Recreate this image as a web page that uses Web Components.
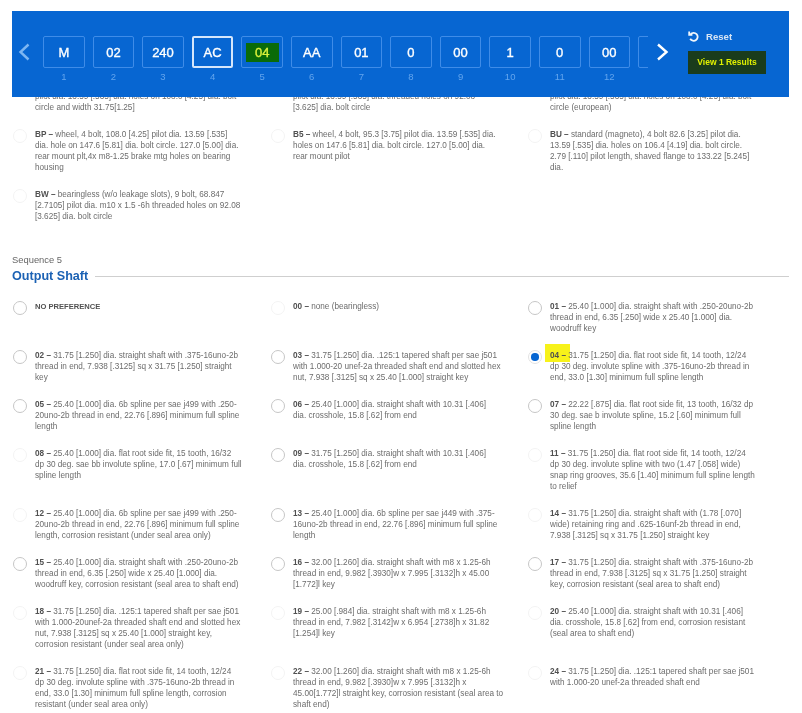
<!DOCTYPE html>
<html>
<head>
<meta charset="utf-8">
<title>Output Shaft</title>
<style>
  html, body { margin: 0; height: 713px; overflow: hidden; background: #fff; }
  body { font-family: "Liberation Sans", Arial, sans-serif; color: #6c6c6c; }
  b { color: #505050; }
  b.caps { font-size: 7.6px; }
</style>
</head>
<body>
<config-bar>
  <seq-cell label="1">M</seq-cell>
  <seq-cell label="2">02</seq-cell>
  <seq-cell label="3">240</seq-cell>
  <seq-cell label="4" active>AC</seq-cell>
  <seq-cell label="5" mark>04</seq-cell>
  <seq-cell label="6">AA</seq-cell>
  <seq-cell label="7">01</seq-cell>
  <seq-cell label="8">0</seq-cell>
  <seq-cell label="9">00</seq-cell>
  <seq-cell label="10">1</seq-cell>
  <seq-cell label="11">0</seq-cell>
  <seq-cell label="12">00</seq-cell>
  <seq-cell label="13"></seq-cell>
</config-bar>

<opt-grid clipped>
  <opt-item hidden-radio>pilot dia. 13.59 [.535] dia. holes on 108.0 [4.25] dia. bolt<br>circle and width 31.75[1.25]</opt-item>
  <opt-item hidden-radio>pilot dia. 13.59 [.535] dia. threaded holes on 92.08<br>[3.625] dia. bolt circle</opt-item>
  <opt-item hidden-radio>pilot dia. 13.59 [.535] dia. holes on 108.0 [4.25] dia. bolt<br>circle (european)</opt-item>

  <opt-item faint><b>BP –</b> wheel, 4 bolt, 108.0 [4.25] pilot dia. 13.59 [.535]<br>dia. hole on 147.6 [5.81] dia. bolt circle. 127.0 [5.00] dia.<br>rear mount plt,4x m8-1.25 brake mtg holes on bearing<br>housing</opt-item>
  <opt-item faint><b>B5 –</b> wheel, 4 bolt, 95.3 [3.75] pilot dia. 13.59 [.535] dia.<br>holes on 147.6 [5.81] dia. bolt circle. 127.0 [5.00] dia.<br>rear mount pilot</opt-item>
  <opt-item faint><b>BU –</b> standard (magneto), 4 bolt 82.6 [3.25] pilot dia.<br>13.59 [.535] dia. holes on 106.4 [4.19] dia. bolt circle.<br>2.79 [.110] pilot length, shaved flange to 133.22 [5.245]<br>dia.</opt-item>

  <opt-item faint><b>BW –</b> bearingless (w/o leakage slots), 9 bolt, 68.847<br>[2.7105] pilot dia. m10 x 1.5 -6h threaded holes on 92.08<br>[3.625] dia. bolt circle</opt-item>
</opt-grid>

<section-head seq="Sequence 5">Output Shaft</section-head>

<opt-grid>
  <opt-item><b class="caps">NO PREFERENCE</b></opt-item>
  <opt-item faint><b>00 –</b> none (bearingless)</opt-item>
  <opt-item><b>01 –</b> 25.40 [1.000] dia. straight shaft with .250-20uno-2b<br>thread in end, 6.35 [.250] wide x 25.40 [1.000] dia.<br>woodruff key</opt-item>

  <opt-item><b>02 –</b> 31.75 [1.250] dia. straight shaft with .375-16uno-2b<br>thread in end, 7.938 [.3125] sq x 31.75 [1.250] straight<br>key</opt-item>
  <opt-item><b>03 –</b> 31.75 [1.250] dia. .125:1 tapered shaft per sae j501<br>with 1.000-20 unef-2a threaded shaft end and slotted hex<br>nut, 7.938 [.3125] sq x 25.40 [1.000] straight key</opt-item>
  <opt-item selected mark><b>04 –</b> 31.75 [1.250] dia. flat root side fit, 14 tooth, 12/24<br>dp 30 deg. involute spline with .375-16uno-2b thread in<br>end, 33.0 [1.30] minimum full spline length</opt-item>

  <opt-item><b>05 –</b> 25.40 [1.000] dia. 6b spline per sae j499 with .250-<br>20uno-2b thread in end, 22.76 [.896] minimum full spline<br>length</opt-item>
  <opt-item><b>06 –</b> 25.40 [1.000] dia. straight shaft with 10.31 [.406]<br>dia. crosshole, 15.8 [.62] from end</opt-item>
  <opt-item><b>07 –</b> 22.22 [.875] dia. flat root side fit, 13 tooth, 16/32 dp<br>30 deg. sae b involute spline, 15.2 [.60] minimum full<br>spline length</opt-item>

  <opt-item faint><b>08 –</b> 25.40 [1.000] dia. flat root side fit, 15 tooth, 16/32<br>dp 30 deg. sae bb involute spline, 17.0 [.67] minimum full<br>spline length</opt-item>
  <opt-item><b>09 –</b> 31.75 [1.250] dia. straight shaft with 10.31 [.406]<br>dia. crosshole, 15.8 [.62] from end</opt-item>
  <opt-item faint><b>11 –</b> 31.75 [1.250] dia. flat root side fit, 14 tooth, 12/24<br>dp 30 deg. involute spline with two (1.47 [.058] wide)<br>snap ring grooves, 35.6 [1.40] minimum full spline length<br>to relief</opt-item>

  <opt-item faint><b>12 –</b> 25.40 [1.000] dia. 6b spline per sae j499 with .250-<br>20uno-2b thread in end, 22.76 [.896] minimum full spline<br>length, corrosion resistant (under seal area only)</opt-item>
  <opt-item><b>13 –</b> 25.40 [1.000] dia. 6b spline per sae j449 with .375-<br>16uno-2b thread in end, 22.76 [.896] minimum full spline<br>length</opt-item>
  <opt-item faint><b>14 –</b> 31.75 [1.250] dia. straight shaft with (1.78 [.070]<br>wide) retaining ring and .625-16unf-2b thread in end,<br>7.938 [.3125] sq x 31.75 [1.250] straight key</opt-item>

  <opt-item><b>15 –</b> 25.40 [1.000] dia. straight shaft with .250-20uno-2b<br>thread in end, 6.35 [.250] wide x 25.40 [1.000] dia.<br>woodruff key, corrosion resistant (seal area to shaft end)</opt-item>
  <opt-item><b>16 –</b> 32.00 [1.260] dia. straight shaft with m8 x 1.25-6h<br>thread in end, 9.982 [.3930]w x 7.995 [.3132]h x 45.00<br>[1.772]l key</opt-item>
  <opt-item><b>17 –</b> 31.75 [1.250] dia. straight shaft with .375-16uno-2b<br>thread in end, 7.938 [.3125] sq x 31.75 [1.250] straight<br>key, corrosion resistant (seal area to shaft end)</opt-item>

  <opt-item faint><b>18 –</b> 31.75 [1.250] dia. .125:1 tapered shaft per sae j501<br>with 1.000-20unef-2a threaded shaft end and slotted hex<br>nut, 7.938 [.3125] sq x 25.40 [1.000] straight key,<br>corrosion resistant (under seal area only)</opt-item>
  <opt-item faint><b>19 –</b> 25.00 [.984] dia. straight shaft with m8 x 1.25-6h<br>thread in end, 7.982 [.3142]w x 6.954 [.2738]h x 31.82<br>[1.254]l key</opt-item>
  <opt-item faint><b>20 –</b> 25.40 [1.000] dia. straight shaft with 10.31 [.406]<br>dia. crosshole, 15.8 [.62] from end, corrosion resistant<br>(seal area to shaft end)</opt-item>

  <opt-item faint><b>21 –</b> 31.75 [1.250] dia. flat root side fit, 14 tooth, 12/24<br>dp 30 deg. involute spline with .375-16uno-2b thread in<br>end, 33.0 [1.30] minimum full spline length, corrosion<br>resistant (under seal area only)</opt-item>
  <opt-item faint><b>22 –</b> 32.00 [1.260] dia. straight shaft with m8 x 1.25-6h<br>thread in end, 9.982 [.3930]w x 7.995 [.3132]h x<br>45.00[1.772]l straight key, corrosion resistant (seal area to<br>shaft end)</opt-item>
  <opt-item faint><b>24 –</b> 31.75 [1.250] dia. .125:1 tapered shaft per sae j501<br>with 1.000-20 unef-2a threaded shaft end</opt-item>
</opt-grid>

<script>
class ConfigBar extends HTMLElement {
  constructor() {
    super();
    this.attachShadow({ mode: 'open' });
    this.shadowRoot.innerHTML = `
      <style>
        :host {
          display: flex;
          position: relative;
          z-index: 2;
          box-sizing: border-box;
          height: 86px;
          margin: 11px 13px 0 12px;
          padding: 25px 0 0 6px;
          background: #0766d2;
          filter: blur(.35px);
        }
        .arrow { flex: none; width: 25px; height: 32px; display: flex; align-items: center; }
        .arrow svg { display: block; }
        .track {
          flex: none;
          display: flex;
          gap: 8px;
          width: 605px;
          overflow: hidden;
          height: 60px;
        }
        .next { width: 40px; padding-left: 8px; box-sizing: border-box; }
        .side { flex: none; display: flex; flex-direction: column; align-items: flex-start; margin-top: -6px; }
        .reset {
          display: flex;
          align-items: center;
          gap: 7px;
          height: 12px;
          margin-bottom: 9px;
          font: bold 9.6px "Liberation Sans", Arial, sans-serif;
          color: #d6e4f4;
        }
        .view {
          display: block;
          box-sizing: border-box;
          width: 78px;
          height: 23px;
          border: 0;
          padding: 0;
          background: #1a3c1c;
          color: #e0f000;
          font: bold 8.5px/23px "Liberation Sans", Arial, sans-serif;
          text-align: center;
        }
      </style>
      <div class="arrow">
        <svg width="12" height="18" viewBox="0 0 12 18" fill="none" stroke="#7db6f2" stroke-width="2.4"><path d="M10.5 1.5 2.5 9l8 7.5"/></svg>
      </div>
      <div class="track"><slot></slot></div>
      <div class="arrow next">
        <svg width="13" height="18" viewBox="0 0 13 18" fill="none" stroke="#fff" stroke-width="2.4"><path d="M2 1.5 10.5 9 2 16.5"/></svg>
      </div>
      <div class="side">
        <div class="reset">
          <svg width="11" height="11" viewBox="0 0 11 11" fill="none" stroke="#f0f5fb" stroke-width="1.8">
            <path d="M2.6 3.2A4 4 0 1 1 2.2 7.8"/><path d="M1.2 .6v3.2h3.2"/>
          </svg>
          Reset
        </div>
        <button class="view">View 1 Results</button>
      </div>`;
  }
}

class SeqCell extends HTMLElement {
  constructor() {
    super();
    this.attachShadow({ mode: 'open' });
    this.shadowRoot.innerHTML = `
      <style>
        :host { display: block; flex: none; width: 41.6px; }
        .box {
          box-sizing: border-box;
          height: 32px;
          border: 1.5px solid #3f8ce8;
          border-radius: 2px;
          display: flex;
          align-items: center;
          justify-content: center;
          font: 13px "Liberation Sans", Arial, sans-serif;
          -webkit-text-stroke: .35px #fff;
          color: #fff;
        }
        :host([active]) .box { border: 2px solid #d5e6fb; }
        :host([mark]) .box span {
          display: block;
          width: 33px;
          height: 19px;
          line-height: 19px;
          text-align: center;
          background: #0a6b08;
          color: #dcf23a;
          -webkit-text-stroke: .35px #dcf23a;
        }
        .num {
          height: 18px;
          text-align: center;
          font: 9.5px/18px "Liberation Sans", Arial, sans-serif;
          color: #63a5ee;
        }
      </style>
      <div class="box"><span><slot></slot></span></div>
      <div class="num"></div>`;
  }
  connectedCallback() {
    this.shadowRoot.querySelector('.num').textContent = this.getAttribute('label');
  }
}

class SectionHead extends HTMLElement {
  constructor() {
    super();
    this.attachShadow({ mode: 'open' });
    this.shadowRoot.innerHTML = `
      <style>
        :host { display: block; margin: 32px 13px 18px 12px; filter: blur(.25px); }
        .seq { font: 9.4px/12px "Liberation Sans", Arial, sans-serif; color: #666; margin-bottom: 3px; }
        .row { display: flex; align-items: center; gap: 7px; }
        .title { font: bold 12.6px/14px "Liberation Sans", Arial, sans-serif; color: #1c62b4; white-space: nowrap; }
        .rule { flex: 1; height: 1px; margin-top: 1px; background: #cfcfcf; }
      </style>
      <div class="seq"></div>
      <div class="row"><div class="title"><slot></slot></div><div class="rule"></div></div>`;
  }
  connectedCallback() {
    this.shadowRoot.querySelector('.seq').textContent = this.getAttribute('seq');
  }
}

class OptGrid extends HTMLElement {
  constructor() {
    super();
    this.attachShadow({ mode: 'open' });
    this.shadowRoot.innerHTML = `
      <style>
        :host {
          display: grid;
          grid-template-columns: 258px 257px 1fr;
          row-gap: 16px;
          padding-left: 13px;
        }
        :host([clipped]) { margin-top: -6px; }
      </style>
      <slot></slot>`;
  }
}

class OptItem extends HTMLElement {
  constructor() {
    super();
    this.attachShadow({ mode: 'open' });
    this.shadowRoot.innerHTML = `
      <style>
        :host { display: flex; gap: 8px; align-items: flex-start; }
        .radio {
          flex: none;
          box-sizing: border-box;
          width: 14px;
          height: 14px;
          border-radius: 50%;
          border: 1.5px solid #c6c6c6;
          background: #fff;
          display: flex;
          align-items: center;
          justify-content: center;
          filter: blur(.3px);
        }
        :host([faint]) .radio { border-color: #f3f3f3; }
        :host([hidden-radio]) .radio { visibility: hidden; }
        :host([selected]) .radio { border-color: #e2e2e2; }
        :host([selected]) .radio::after {
          content: "";
          width: 7.5px;
          height: 7.5px;
          border-radius: 50%;
          background: #0766d2;
        }
        .text {
          position: relative;
          font: 8.2px/11px "Liberation Sans", Arial, sans-serif;
          white-space: nowrap;
          color: #6c6c6c;
          filter: blur(.4px);
        }
        .hl { display: none; }
        :host([mark]) .hl {
          display: block;
          position: absolute;
          left: -5px;
          top: -6px;
          width: 25px;
          height: 18px;
          background: #f7f21a;
        }
        .body { position: relative; }
      </style>
      <span class="radio"></span>
      <div class="text"><span class="hl"></span><div class="body"><slot></slot></div></div>`;
  }
}

customElements.define('config-bar', ConfigBar);
customElements.define('seq-cell', SeqCell);
customElements.define('section-head', SectionHead);
customElements.define('opt-grid', OptGrid);
customElements.define('opt-item', OptItem);
</script>
</body>
</html>
